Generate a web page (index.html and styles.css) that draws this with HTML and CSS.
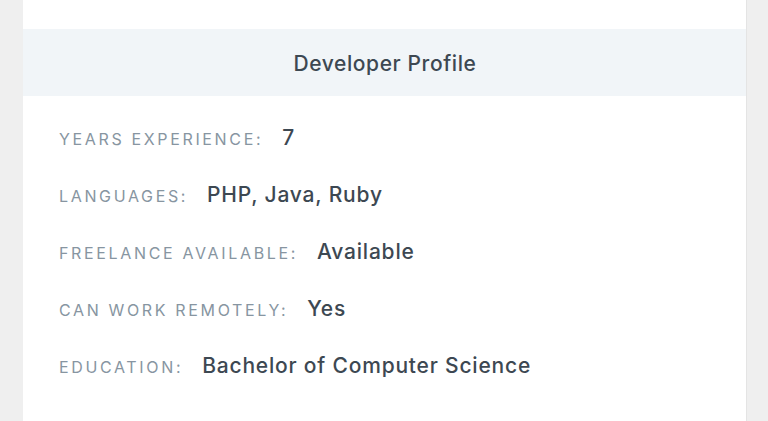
FILE: index.html
```html
<!DOCTYPE html>
<html lang="en">
<head>
<meta charset="utf-8">
<title>Developer Profile</title>
<link rel="stylesheet" href="styles.css">
</head>
<body>
<div class="card">
  <div class="card-top"></div>
  <div class="card-header">Developer Profile</div>
  <div class="details">
    <div class="row"><span class="label">Years Experience:</span><span class="value">7</span></div>
    <div class="row"><span class="label">Languages:</span><span class="value">PHP, Java, Ruby</span></div>
    <div class="row"><span class="label">Freelance Available:</span><span class="value">Available</span></div>
    <div class="row"><span class="label">Can Work Remotely:</span><span class="value">Yes</span></div>
    <div class="row"><span class="label">Education:</span><span class="value">Bachelor of Computer Science</span></div>
  </div>
</div>
</body>
</html>
```

FILE: styles.css
```css
html, body {
  margin: 0;
  padding: 0;
  height: 100%;
  overflow: hidden;
}
body {
  background: #efefef;
  font-family: "Inter", "Liberation Sans", Arial, sans-serif;
}
.card {
  margin-left: 23px;
  width: 723px;
  min-height: 100%;
  background: #ffffff;
  border-right: 1px solid #e4e4e4;
}
.card-top {
  height: 29px;
}
.card-header {
  height: 67px;
  padding-top: 1px;
  box-sizing: border-box;
  background: #f1f5f8;
  display: flex;
  align-items: center;
  justify-content: center;
  font-size: 21px;
  letter-spacing: 0.6px;
  font-weight: 500;
  color: #3d4852;
  padding-left: 1px;
}
.details {
  padding-top: 14px;
}
.row {
  display: flex;
  align-items: baseline;
  box-sizing: border-box;
  height: 56.8px;
  padding: 14.4px 36px 0;
  line-height: 28px;
}
.label {
  text-transform: uppercase;
  font-size: 16px;
  letter-spacing: 2.65px;
  color: #8795a1;
  margin-right: 19px;
}
.value {
  font-size: 21px;
  letter-spacing: 0.8px;
  font-weight: 500;
  color: #3d4852;
}
```
